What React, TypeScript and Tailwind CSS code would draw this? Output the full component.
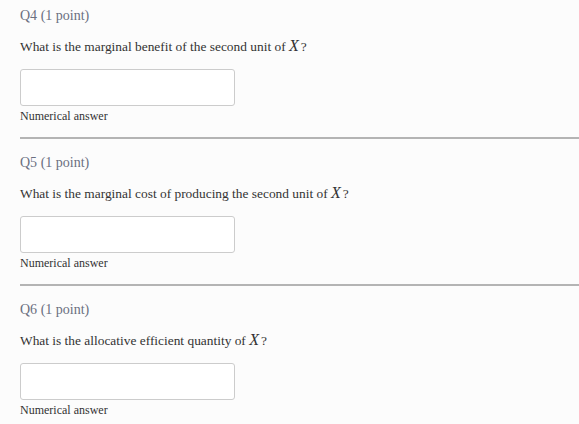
const questions = [
  { id: 'Q4', text: 'What is the marginal benefit of the second unit of' },
  { id: 'Q5', text: 'What is the marginal cost of producing the second unit of' },
  { id: 'Q6', text: 'What is the allocative efficient quantity of' },
];

function Question({ id, text, last }: { id: string; text: string; last: boolean }) {
  return (
    <div className={last ? '' : 'border-b-2 border-[#b4b4b4] pb-[14px]'}>
      <div className="text-[14px] leading-5 text-[#6a6f80]">{id} (1 point)</div>
      <p className="mt-[10px] text-[13.4px] leading-5 text-[#333]">
        {text}{' '}
        <span className="italic text-[16px] mr-[2px]">X</span>?
      </p>
      <input
        type="text"
        className="mt-[12px] block w-[215px] h-[37px] bg-white border border-[#ccc] rounded-[3px]"
      />
      <div className="mt-[3px] text-[12px] leading-[14px] text-[#333]">Numerical answer</div>
    </div>
  );
}

export default function App() {
  return (
    <div className="min-h-screen bg-[#fcfcfc] pt-[6px] pl-5 font-['Liberation_Serif',serif]">
      <div className="flex flex-col gap-[14px]">
        {questions.map((q, i) => (
          <Question key={q.id} id={q.id} text={q.text} last={i === questions.length - 1} />
        ))}
      </div>
    </div>
  );
}
